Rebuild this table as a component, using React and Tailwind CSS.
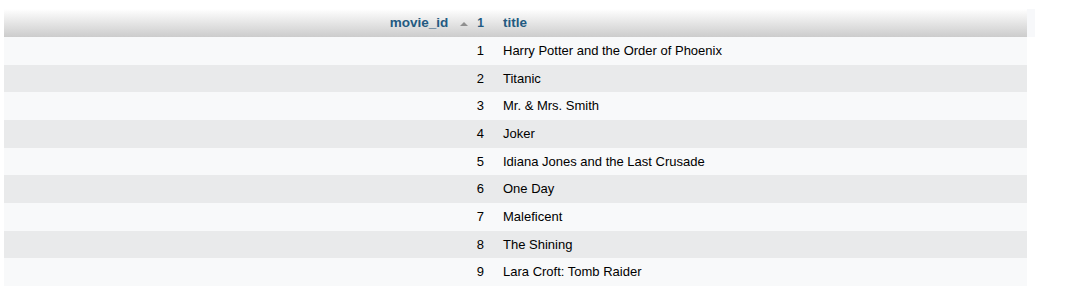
import React from 'react';

const movies = [
  { id: 1, title: 'Harry Potter and the Order of Phoenix' },
  { id: 2, title: 'Titanic' },
  { id: 3, title: 'Mr. & Mrs. Smith' },
  { id: 4, title: 'Joker' },
  { id: 5, title: 'Idiana Jones and the Last Crusade' },
  { id: 6, title: 'One Day' },
  { id: 7, title: 'Maleficent' },
  { id: 8, title: 'The Shining' },
  { id: 9, title: 'Lara Croft: Tomb Raider' },
];

const App = () => {
  return (
    <div className="bg-white min-h-[300px] pl-[4px] pt-[9px] text-[13px] text-black" style={{ fontFamily: '"Liberation Sans", Arial, sans-serif' }}>
      {/* header row */}
      <div className="flex">
        <div className="flex w-[1023px] h-[28px] bg-gradient-to-b from-white to-[#cccccc] items-center">
          <div className="w-[490px] flex justify-end items-center pr-[10px] font-bold text-[#235a81] text-[13.5px]">
            <span>movie_id</span>
            <span className="ml-[12px] mt-[2px] w-0 h-0 border-l-[4px] border-r-[4px] border-b-[4px] border-l-transparent border-r-transparent border-b-[#8f8f8f]" />
            <span className="ml-[9px] text-[12px]">1</span>
          </div>
          <div className="pl-[9px] font-bold text-[#235a81] text-[13.5px]">title</div>
        </div>
        <div className="w-[8px] h-[28px] bg-[#f7f8fa]" />
      </div>

      {/* body rows */}
      <div className="w-[1023px]">
        {movies.map((m, i) => (
          <div key={m.id} className={`flex h-[27.67px] items-center ${i % 2 === 0 ? 'bg-[#f8f9fa]' : 'bg-[#e9eaeb]'}`}>
            <div className="w-[490px] text-right pr-[10px]">{m.id}</div>
            <div className="pl-[9px]">{m.title}</div>
          </div>
        ))}
      </div>
    </div>
  );
};

export default App;
